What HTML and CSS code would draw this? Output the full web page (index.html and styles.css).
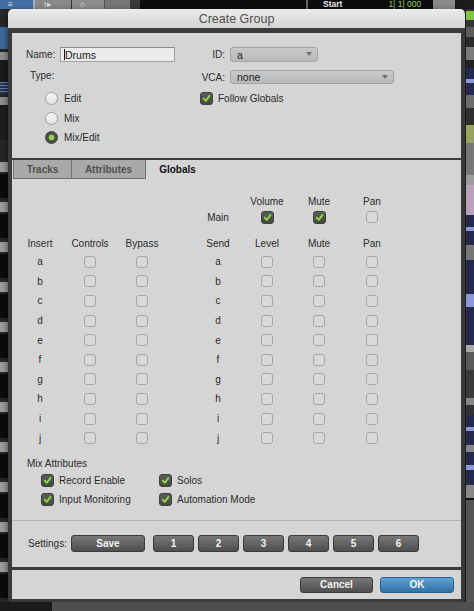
FILE: index.html
```html
<!DOCTYPE html>
<html lang="en">

<head>
    <meta charset="UTF-8">
    <title>Create Group</title>
    <link rel="stylesheet" href="styles.css">
</head>

<body>
    <div class="daw">
        <!-- toolbar strip behind the dialog -->
        <div class="daw-top">
            <span class="tb tb-blue"><span class="glyph">≡</span></span>
            <span class="tb tb-tool"><span class="glyph">↕▸</span></span>
            <span class="tb tb-tool2"><span class="glyph">⌂</span></span>
            <span class="tb tb-gray"></span>
            <span class="tb tb-dark"></span>
            <span class="tb tb-black"></span>
            <span class="tb tb-counter">
                <span class="start">Start</span>
                <span class="time">1| 1| 000</span>
            </span>
            <span class="tb tb-gray2"></span>
            <span class="tb tb-end"></span>
        </div>

        <div class="daw-left">
            <div class="lt lt-blue"></div>
            <div class="lt lt-gray"></div>
            <div class="lt lt-dark"></div>
            <div class="lt lt-lines"></div>
            <div class="lt lt-gray"></div>
            <div class="lt lt-dark2"></div>
            <div class="lt lt-tracks"></div>
        </div>

        <div class="dialog">
            <div class="titlebar">Create Group</div>
            <div class="frame">

                <div class="panel top-panel">
                    <div class="col-left">
                        <div class="field-row name-row">
                            <span class="lbl name-lbl">Name:</span>
                            <span class="text-input"><span class="caret"></span>Drums</span>
                        </div>
                        <div class="type-row">Type:</div>
                        <div class="radios">
                            <div class="radio-row"><span class="radio"></span>Edit</div>
                            <div class="radio-row"><span class="radio"></span>Mix</div>
                            <div class="radio-row"><span class="radio on"></span>Mix/Edit</div>
                        </div>
                    </div>
                    <div class="col-right">
                        <div class="field-row id-row">
                            <span class="lbl right-lbl">ID:</span>
                            <span class="select id-select">a</span>
                        </div>
                        <div class="field-row vca-row">
                            <span class="lbl right-lbl">VCA:</span>
                            <span class="select vca-select">none</span>
                        </div>
                        <div class="check-row follow-row">
                            <span class="cb on"><svg viewBox="0 0 13 13"><path d="M3.2 6.6 L5.6 9.3 L10 3.4" /></svg></span>
                            Follow Globals
                        </div>
                    </div>
                </div>

                <div class="panel tab-panel">
                    <div class="tabs">
                        <span class="tab tracks">Tracks</span>
                        <span class="tab attributes">Attributes</span>
                        <span class="tab active">Globals</span>
                    </div>

                    <div class="globals">
                        <div class="g-row head-top">
                            <span></span><span></span><span></span><span></span><span></span>
                            <span>Volume</span><span>Mute</span><span>Pan</span>
                        </div>
                        <div class="g-row main-row">
                            <span></span><span></span><span></span><span></span>
                            <span>Main</span>
                            <span class="cb on"><svg viewBox="0 0 13 13"><path d="M3.2 6.6 L5.6 9.3 L10 3.4" /></svg></span>
                            <span class="cb on"><svg viewBox="0 0 13 13"><path d="M3.2 6.6 L5.6 9.3 L10 3.4" /></svg></span>
                            <span class="cb"></span>
                        </div>
                        <div class="g-row head">
                            <span>Insert</span><span>Controls</span><span>Bypass</span><span></span>
                            <span>Send</span><span>Level</span><span>Mute</span><span>Pan</span>
                        </div>
                        <div class="g-rows"></div>
                    </div>

                    <div class="mix">
                        <div class="mix-title">Mix Attributes</div>
                        <div class="mix-grid">
                            <div class="check-row"><span class="cb on"><svg viewBox="0 0 13 13"><path d="M3.2 6.6 L5.6 9.3 L10 3.4" /></svg></span>Record Enable</div>
                            <div class="check-row"><span class="cb on"><svg viewBox="0 0 13 13"><path d="M3.2 6.6 L5.6 9.3 L10 3.4" /></svg></span>Solos</div>
                            <div class="check-row"><span class="cb on"><svg viewBox="0 0 13 13"><path d="M3.2 6.6 L5.6 9.3 L10 3.4" /></svg></span>Input Monitoring</div>
                            <div class="check-row"><span class="cb on"><svg viewBox="0 0 13 13"><path d="M3.2 6.6 L5.6 9.3 L10 3.4" /></svg></span>Automation Mode</div>
                        </div>
                    </div>

                    <div class="settings">
                        <span class="settings-lbl">Settings:</span>
                        <span class="btn save">Save</span>
                        <span class="btn num">1</span>
                        <span class="btn num">2</span>
                        <span class="btn num">3</span>
                        <span class="btn num">4</span>
                        <span class="btn num">5</span>
                        <span class="btn num">6</span>
                    </div>
                </div>

                <div class="panel button-bar">
                    <span class="btn cancel">Cancel</span>
                    <span class="btn ok">OK</span>
                </div>
            </div>
        </div>

        <div class="daw-right">
            <div class="rt" style="height:2px;background:#2e2e2e"></div>
            <div class="rt" style="height:9px;background:#82c447"></div>
            <div class="rt" style="height:7px;background:#343434"></div>
            <div class="rt" style="height:10px;background:#5c5c5c"></div>
            <div class="rt" style="height:10px;background:#2a2a2a"></div>
            <div class="rt" style="height:13px;background:#7b7b7b"></div>
            <div class="rt" style="height:8px;background:#222"></div>
            <div class="rt wave" style="height:27px"></div>
            <div class="rt" style="height:13px;background:#6c6c6c"></div>
            <div class="rt" style="height:17px;background:#2f2f2f"></div>
            <div class="rt" style="height:18px;background:#98a35e"></div>
            <div class="rt" style="height:32px;background:#787878"></div>
            <div class="rt" style="height:10px;background:#9c9c9c"></div>
            <div class="rt" style="height:30px;background:#b9a3bb"></div>
            <div class="rt wave" style="height:30px"></div>
            <div class="rt" style="height:15px;background:#777"></div>
            <div class="rt wave" style="height:85px"></div>
            <div class="rt" style="height:7px;background:#aaa"></div>
            <div class="rt" style="height:18px;background:#5a5a5a"></div>
            <div class="rt" style="height:28px;background:#3a3a3a"></div>
            <div class="rt" style="height:7px;background:#888"></div>
            <div class="rt" style="height:10px;background:#333"></div>
            <div class="rt wave" style="height:30px"></div>
            <div class="rt" style="height:7px;background:#888"></div>
            <div class="rt wave" style="height:33px"></div>
            <div class="rt" style="height:13px;background:#888"></div>
            <div class="rt" style="height:2px;background:#111"></div>
            <div class="rt" style="flex:1;background:#555"></div>
        </div>

        <div class="daw-bottom"></div>
    </div>

    <script>
        // insert / send rows a-j
        (() => {
            const letters = ['a', 'b', 'c', 'd', 'e', 'f', 'g', 'h', 'i', 'j'],
                rows = document.querySelector('.g-rows')

            function rowTpl(l) {
                return `<div class="g-row"><span>${l}</span><span class="cb"></span><span class="cb"></span><span></span>` +
                    `<span>${l}</span><span class="cb"></span><span class="cb"></span><span class="cb"></span></div>`
            }

            rows.innerHTML = letters.map(rowTpl).join('')
        })();
    </script>
</body>

</html>
```

FILE: styles.css
```css
body {
    margin: 0;
    font-family: "Liberation Sans", Arial, sans-serif;
    font-size: 10px;
    color: #2b2b2b;
    background: #2a2a2a;
}

.daw {
    width: 474px;
    height: 611px;
    overflow: hidden;
    display: grid;
    grid-template-columns: 8px 457px 9px;
    grid-template-rows: 9px 593px 9px;
}

/* background strips */
.daw-top {
    grid-column: 1 / 4;
    display: flex;
    overflow: hidden;
    background: #222;
}

.tb {
    display: flex;
    align-items: center;
    height: 9px;
    overflow: hidden;
    white-space: nowrap;
}

.tb .glyph {
    color: #e8e8e8;
    font-size: 8px;
    line-height: 9px;
    padding-left: 8px;
}

.tb-blue {
    width: 33px;
    background: #426fa3;
    border-right: 2px solid #9fb3cc;
}

.tb-tool {
    width: 36px;
    background: #8a8a8a;
    border-right: 1px solid #333;
}

.tb-tool2 {
    width: 32px;
    background: #8c8c8c;
}

.tb-gray {
    width: 25px;
    background: #767676;
    border-left: 1px solid #555;
}

.tb-dark {
    width: 10px;
    background: #3a3a3a;
}

.tb-black {
    width: 166px;
    background: #0d0d0d;
    border-right: 2px solid #6a6a6a;
}

.tb-counter {
    width: 125px;
    background: #0d0d0d;
    border-right: 3px solid #8a8a8a;
}

.tb-counter .start {
    color: #eee;
    font-weight: bold;
    font-size: 8.5px;
    line-height: 9px;
    margin-left: 15px;
}

.tb-counter .time {
    color: #8fd34a;
    font-size: 8.5px;
    line-height: 9px;
    margin-left: 46px;
}

.tb-gray2 {
    width: 19px;
    background: #8a8a8a;
}

.tb-end {
    flex: 1;
    background: #1c1c1c;
    border-bottom: 3px solid #7fc144;
}

.daw-left {
    grid-row: 2 / 3;
    display: flex;
    flex-direction: column;
    background: #262626;
}

.lt-blue {
    height: 22px;
    margin-top: 18px;
    background: #3d6a9b;
}

.lt-gray {
    height: 8px;
    margin-top: 3px;
    background: #8e8e8e;
}

.lt-dark {
    height: 22px;
    background: #1a1a1a;
}

.lt-lines {
    height: 12px;
    background: repeating-linear-gradient(to bottom, #5a7fb0 0 1px, #2a3550 1px 3px);
}

.lt-dark2 {
    height: 35px;
    background: #1d1d1d;
}

.lt-tracks {
    flex: 1;
    margin-top: 20px;
    background: repeating-linear-gradient(to bottom,
            #2b2b2b 0 2px,
            #9a9a9a 2px 12px,
            #262626 12px 14px,
            #0b0b0b 14px 38px,
            #262626 38px 40px);
}

.daw-right {
    grid-row: 2 / 3;
    grid-column: 3 / 4;
    display: flex;
    flex-direction: column;
    border-left: 1px solid #1a1a1a;
}

.rt.wave {
    background:
        linear-gradient(to bottom, transparent 40%, #8c98d8 40% 55%, transparent 55%),
        #252a4d;
}

.daw-bottom {
    grid-column: 1 / 4;
    background: linear-gradient(to right, #1b1b1b 0 52px, #4f4f4f 52px);
}

/* dialog */
.dialog {
    display: flex;
    flex-direction: column;
    box-shadow: 0 2px 6px rgba(0, 0, 0, .6);
    border-radius: 5px 5px 3px 3px;
}

.titlebar {
    height: 19px;
    line-height: 20px;
    text-align: center;
    font-size: 12.5px;
    color: #505050;
    background: linear-gradient(to bottom, #ececec, #d3d3d3);
    border-radius: 5px 5px 0 0;
}

.frame {
    flex: 1;
    display: flex;
    flex-direction: column;
    padding: 5px 4px 3px;
    background: #3b3b3b;
    border-radius: 0 0 3px 3px;
}

.panel {
    background: #d5d5d5;
}

.top-panel {
    height: 125px;
    display: flex;
}

.col-left {
    width: 186px;
    padding-top: 14px;
    display: flex;
    flex-direction: column;
}

.col-right {
    padding-top: 14px;
    display: flex;
    flex-direction: column;
}

.field-row {
    display: flex;
    align-items: center;
}

.name-row {
    height: 15px;
    padding-left: 14px;
}

.name-lbl {
    width: 34px;
}

.text-input {
    width: 115px;
    height: 15px;
    box-sizing: border-box;
    display: flex;
    align-items: center;
    padding-left: 3px;
    font-size: 10.5px;
    color: #222;
    background: #ebebeb;
    border: 1px solid #a2a2a2;
    border-top-color: #8a8a8a;
}

.caret {
    width: 1px;
    height: 11px;
    background: #111;
}

.type-row {
    height: 14px;
    line-height: 14px;
    margin-top: 7px;
    padding-left: 18px;
}

.radios {
    margin-top: 6px;
    padding-left: 33px;
}

.radio-row {
    height: 19.5px;
    display: flex;
    align-items: center;
    gap: 6px;
}

.radio {
    width: 13px;
    height: 13px;
    box-sizing: border-box;
    border-radius: 50%;
    border: 1px solid #a0a0a0;
    background: linear-gradient(to bottom, #f6f6f6, #e2e2e2);
}

.radio.on {
    border-color: #3e3e3e;
    background: radial-gradient(circle, #8ed443 0 2.6px, #4d4f4b 3.2px);
}

.right-lbl {
    width: 27px;
    text-align: right;
    margin-right: 5px;
}

.id-row {
    height: 15px;
}

.vca-row {
    height: 14px;
    margin-top: 8px;
}

.select {
    position: relative;
    height: 100%;
    box-sizing: border-box;
    display: flex;
    align-items: center;
    padding-left: 6px;
    font-size: 10.5px;
    color: #222;
    background: linear-gradient(to bottom, #c9c9c9, #b9b9b9);
    border: 1px solid #a3a3a3;
    border-radius: 3px;
}

/* drop-down arrow */
.select::after {
    content: "";
    position: absolute;
    right: 5px;
    top: 4px;
    border-left: 3px solid transparent;
    border-right: 3px solid transparent;
    border-top: 4px solid #707070;
}

.id-select {
    width: 88px;
}

.vca-select {
    width: 164px;
}

.check-row {
    display: flex;
    align-items: center;
    gap: 5px;
}

.follow-row {
    height: 13px;
    margin-top: 8px;
    padding-left: 2px;
}

.cb {
    width: 12px;
    height: 12px;
    box-sizing: border-box;
    border: 1px solid #a6a6a6;
    border-radius: 3px;
    background: #d9d9d9;
}

.cb.on {
    width: 13px;
    height: 13px;
    border-color: #3d3f3a;
    background: linear-gradient(to bottom, #5b5e56, #45483f);
}

.cb svg {
    display: block;
    width: 11px;
    height: 11px;
}

.cb svg path {
    fill: none;
    stroke: #8fd645;
    stroke-width: 2.2;
    stroke-linecap: round;
    stroke-linejoin: round;
}

/* tabs + globals */
.tab-panel {
    height: 407px;
    margin-top: 2px;
    display: flex;
    flex-direction: column;
}

.tabs {
    height: 19px;
    display: flex;
    padding-left: 1px;
}

.tab {
    display: flex;
    align-items: center;
    justify-content: center;
    font-weight: bold;
    color: #505050;
    box-sizing: border-box;
}

.tracks,
.attributes {
    background: #a9a9a9;
    border: 1px solid #727272;
    border-top: none;
}

.tracks {
    width: 59px;
}

.attributes {
    width: 74px;
    border-left: none;
}

.tab.active {
    width: 63px;
    color: #111;
}

.globals {
    padding-left: 10px;
    padding-top: 14px;
}

.g-row {
    display: grid;
    grid-template-columns: 36px 64px 40px 30px 52px 46px 58px 48px;
    height: 19.6px;
    align-items: center;
    justify-items: center;
}

.g-row.head-top,
.g-row.main-row {
    height: 16px;
}

.g-row.head {
    height: 17px;
    margin-top: 10px;
}

.mix {
    margin-top: 9px;
}

.mix-title {
    height: 14px;
    line-height: 14px;
    padding-left: 15px;
}

.mix-grid {
    display: grid;
    grid-template-columns: 118px 1fr;
    grid-auto-rows: 19px;
    padding-left: 29px;
}

.mix-grid .check-row {
    gap: 4px;
}

.mix-grid .check-row .cb {
    margin-right: 1px;
}

.settings {
    flex: 1;
    margin-top: 11px;
    border-top: 1px solid #b2b2b2;
    display: flex;
    align-items: flex-start;
    padding: 14px 0 0 16px;
}

.settings-lbl {
    height: 17px;
    line-height: 17px;
    margin-right: 4px;
}

.btn {
    height: 17px;
    box-sizing: border-box;
    display: flex;
    align-items: center;
    justify-content: center;
    font-weight: bold;
    color: #f2f2f2;
    background: linear-gradient(to bottom, #777, #4f4f4f);
    border: 1px solid #3a3a3a;
    border-radius: 3px;
}

.save {
    width: 74px;
    margin-right: 8px;
}

.num {
    width: 41px;
    margin-right: 4px;
}

.button-bar {
    height: 29px;
    margin-top: 3px;
    display: flex;
    align-items: center;
    justify-content: flex-end;
    padding-right: 7px;
}

.cancel {
    width: 73px;
    height: 16px;
    margin-right: 7px;
}

.ok {
    width: 74px;
    height: 16px;
    background: linear-gradient(to bottom, #5fa3d2, #2f73a6);
    border-color: #28618d;
}
```
